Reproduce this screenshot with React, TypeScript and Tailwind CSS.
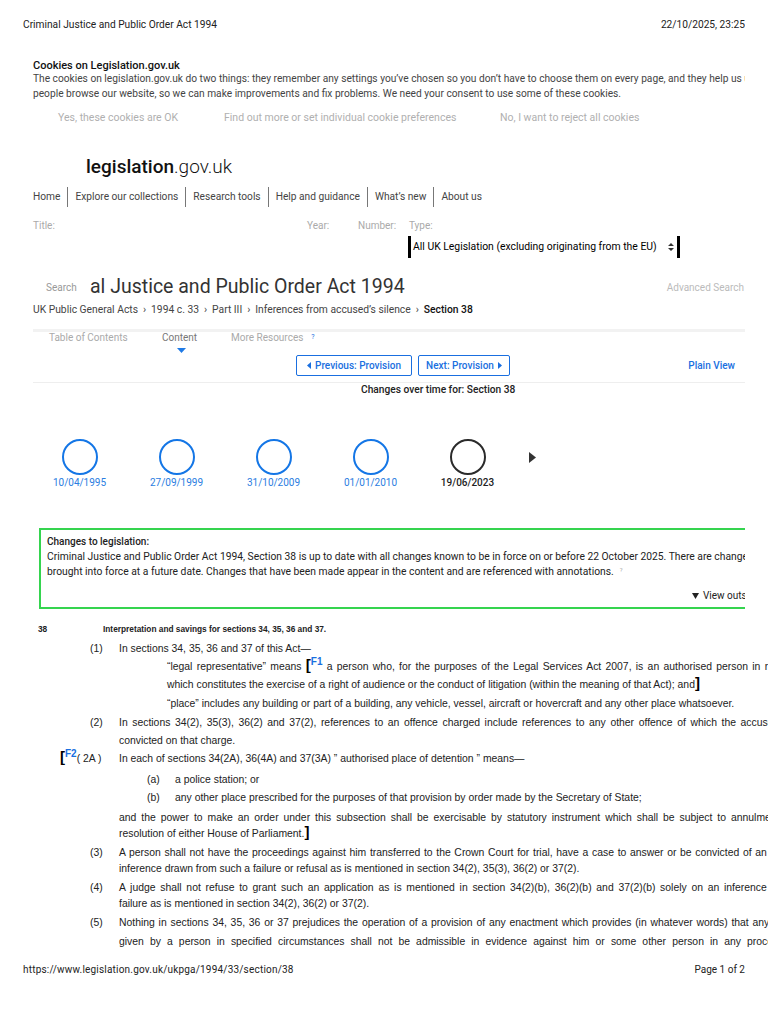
import type { ReactNode } from "react";

const dates = ["10/04/1995", "27/09/1999", "31/10/2009", "01/01/2010", "19/06/2023"];

const Sup = ({ children }: { children: ReactNode }) => (
  <span className="relative -top-[5px] text-[10px] font-bold text-[#1a6fe0] font-['Liberation_Sans',Arial,sans-serif]">
    {children}
  </span>
);

const Bracket = ({ children }: { children: ReactNode }) => (
  <span className="text-[15px] font-bold leading-[10px] text-black">{children}</span>
);

const App = () => {
  return (
    <div className="w-[768px] h-[1024px] overflow-hidden bg-white text-[#222] font-['Roboto',sans-serif]">
      {/* web part, clipped a bit before the page edge */}
      <div className="w-[745px] overflow-hidden">
        <div className="h-[50px] flex items-center justify-between pl-[23px] text-[10.2px] text-[#222]">
          <span>Criminal Justice and Public Order Act 1994</span>
          <span>22/10/2025, 23:25</span>
        </div>

        <div className="pl-[33px]">
          <div className="mt-[9px] h-[13px] leading-[13px] text-[11px] font-medium text-[#111]">
            Cookies on Legislation.gov.uk
          </div>
          <div className="text-[10.2px] leading-[14.5px] text-[#444] whitespace-nowrap">
            <div>
              The cookies on legislation.gov.uk do two things: they remember any settings you’ve chosen so you don’t have to choose them on every page, and they help us understand how
            </div>
            <div>
              people browse our website, so we can make improvements and fix problems. We need your consent to use some of these cookies.
            </div>
          </div>
          <div className="h-[34px] flex items-center pl-[25px] text-[10.5px] text-[#b0b0b0] whitespace-nowrap">
            <span className="w-[166px]">Yes, these cookies are OK</span>
            <span className="w-[276px]">Find out more or set individual cookie preferences</span>
            <span>No, I want to reject all cookies</span>
          </div>
        </div>

        <div className="mt-[19px] h-[26px] flex items-center pl-[86px] text-[19px] text-[#111]">
          <span className="font-medium">legislation</span>
          <span className="font-light">.gov.uk</span>
        </div>

        <nav className="h-[34px] flex items-center pl-[33px] text-[10.2px] text-[#444] whitespace-nowrap">
          <span className="h-[20px] flex items-center pr-[7px]">Home</span>
          <span className="h-[20px] flex items-center px-[7px] border-l border-[#777]">Explore our collections</span>
          <span className="h-[20px] flex items-center px-[7px] border-l border-[#777]">Research tools</span>
          <span className="h-[20px] flex items-center px-[7px] border-l border-[#777]">Help and guidance</span>
          <span className="h-[20px] flex items-center px-[7px] border-l border-[#777]">What’s new</span>
          <span className="h-[20px] flex items-center px-[7px] border-l border-[#777]">About us</span>
        </nav>

        <div className="h-[22px] flex items-center pl-[33px] text-[10px] text-[#aaa]">
          <span className="w-[274px]">Title:</span>
          <span className="w-[51px]">Year:</span>
          <span className="w-[51px]">Number:</span>
          <span>Type:</span>
        </div>
        <div className="ml-[408px] w-[272px] h-[22px] flex items-center justify-between border-x-[3px] border-black pl-[2px] pr-[3px] text-[10.4px] text-black whitespace-nowrap">
          <span>All UK Legislation (excluding originating from the EU)</span>
          <svg width="6" height="10" viewBox="0 0 6 10" className="shrink-0 text-[#333]">
            <path d="M0 4 L3 1 L6 4 Z M0 6 L3 9 L6 6 Z" fill="currentColor" />
          </svg>
        </div>

        <div className="mt-[13px] h-[32px] flex items-center pl-[46px] pr-[1px] whitespace-nowrap">
          <span className="w-[44px] text-[10px] text-[#999]">Search</span>
          <span className="flex-1 text-[19.5px] text-[#333]">al Justice and Public Order Act 1994</span>
          <span className="text-[10px] text-[#bbb]">Advanced Search</span>
        </div>
        <div className="h-[14px] flex items-center gap-[5px] pl-[33px] text-[10.3px] text-[#444] whitespace-nowrap">
          <span>UK Public General Acts</span>
          <span>›</span>
          <span>1994 c. 33</span>
          <span>›</span>
          <span>Part III</span>
          <span>›</span>
          <span>Inferences from accused’s silence</span>
          <span>›</span>
          <span className="text-[#111] font-medium">Section 38</span>
        </div>

        <div className="mt-[12px] ml-[33px] h-[3px] bg-[#f2f2f2]" />
        <div className="h-[10px] flex items-center pl-[49px] text-[10px] text-[#aaa] whitespace-nowrap">
          <span className="w-[113px]">Table of Contents</span>
          <span className="w-[69px] text-[#777]">Content</span>
          <span>More Resources</span>
          <span className="ml-[8px] text-[7px] text-[#1a6fe0]">?</span>
        </div>
        <div className="h-[13px] flex items-end pb-[2px] pl-[177px]">
          <svg width="9" height="5" viewBox="0 0 9 5">
            <path d="M0 0 H9 L4.5 5 Z" fill="#1f7ae6" />
          </svg>
        </div>
        <div className="h-[21px] flex items-center pl-[296px] pr-[10px] text-[10px] font-medium text-[#1a6fe0] whitespace-nowrap">
          <span className="w-[116px] h-[21px] flex items-center justify-center gap-[4px] border border-[#1a6fe0] rounded-[2px]">
            <svg width="4" height="7" viewBox="0 0 4 7">
              <path d="M4 0 V7 L0 3.5 Z" fill="currentColor" />
            </svg>
            Previous: Provision
          </span>
          <span className="ml-[6px] w-[92px] h-[21px] flex items-center justify-center gap-[4px] border border-[#1a6fe0] rounded-[2px]">
            Next: Provision
            <svg width="4" height="7" viewBox="0 0 4 7">
              <path d="M0 0 V7 L4 3.5 Z" fill="currentColor" />
            </svg>
          </span>
          <span className="ml-auto">Plain View</span>
        </div>
        <div className="mt-[6px] ml-[33px] border-t border-[#eee]" />
        <div className="h-[14px] flex items-center pl-[361px] text-[10.2px] font-medium text-[#222]">
          Changes over time for: Section 38
        </div>

        <div className="mt-[42px] flex pl-[31px]">
          {dates.map((d, i) => (
            <div key={d} className="w-[97px] flex flex-col items-center">
              <div
                className={
                  i === 4
                    ? "w-[36px] h-[36px] rounded-full border-[2.5px] border-[#2b2b2b]"
                    : "w-[36px] h-[36px] rounded-full border-[2.5px] border-[#1476e6]"
                }
              />
              <div
                className={
                  i === 4
                    ? "mt-[2px] h-[12px] leading-[12px] text-[10px] font-medium text-[#222]"
                    : "mt-[2px] h-[12px] leading-[12px] text-[10px] text-[#2a7de1]"
                }
              >
                {d}
              </div>
            </div>
          ))}
          <div className="h-[36px] flex items-center ml-[13px]">
            <svg width="7" height="11" viewBox="0 0 7 11">
              <path d="M0 0 L7 5.5 L0 11 Z" fill="#333" />
            </svg>
          </div>
        </div>

        <div className="mt-[39px] ml-[39px] w-[760px] h-[81px] border-2 border-[#35d44f] pl-[6px] text-[10.3px] text-[#222] whitespace-nowrap">
          <div className="mt-[5px] h-[14px] leading-[14px] text-[10px] font-medium">Changes to legislation:</div>
          <div className="leading-[15px]">
            Criminal Justice and Public Order Act 1994, Section 38 is up to date with all changes known to be in force on or before 22 October 2025. There are changes that may be
          </div>
          <div className="leading-[15px]">
            brought into force at a future date. Changes that have been made appear in the content and are referenced with annotations.
            <span className="ml-[6px] relative -top-[3px] text-[6px] text-[#aaa]">?</span>
          </div>
          <div className="mt-[10px] h-[12px] leading-[12px] pl-[645px] flex items-center gap-[4px] text-[10px]">
            <svg width="7" height="6" viewBox="0 0 7 6" className="shrink-0">
              <path d="M0 0 H7 L3.5 6 Z" fill="#222" />
            </svg>
            <span>View outstanding changes</span>
          </div>
        </div>
      </div>

      {/* provision text */}
      <div className="font-['Liberation_Sans',Arial,sans-serif] text-[10.4px] leading-[16px] text-[#222] whitespace-nowrap">
        <div className="mt-[12px] h-[16px] flex items-center font-bold text-[8.3px]">
          <span className="pl-[38px] w-[103px]">38</span>
          <span>Interpretation and savings for sections 34, 35, 36 and 37.</span>
        </div>

        <div className="mt-[4px] flex pl-[90px]">
          <span className="w-[29px]">(1)</span>
          <span>In sections 34, 35, 36 and 37 of this Act—</span>
        </div>
        <div className="mt-[2px] pl-[167px] [word-spacing:1.4px]">
          “legal representative” means <Bracket>[</Bracket><Sup>F1</Sup> a person who, for the purposes of the Legal Services Act 2007, is an authorised person in relation to an activity
        </div>
        <div className="mt-[2px] pl-[167px]">
          which constitutes the exercise of a right of audience or the conduct of litigation (within the meaning of that Act); and<Bracket>]</Bracket>
        </div>
        <div className="mt-[3px] pl-[167px]">
          “place” includes any building or part of a building, any vehicle, vessel, aircraft or hovercraft and any other place whatsoever.
        </div>

        <div className="mt-[3px] flex pl-[90px]">
          <span className="w-[29px] shrink-0">(2)</span>
          <div>
            <div className="[word-spacing:1.7px]">
              In sections 34(2), 35(3), 36(2) and 37(2), references to an offence charged include references to any other offence of which the accused could lawfully be
            </div>
            <div className="mt-[2px]">convicted on that charge.</div>
          </div>
        </div>

        <div className="mt-[2px] flex pl-[60px]">
          <span className="w-[59px] shrink-0">
            <Bracket>[</Bracket><Sup>F2</Sup>( 2A )
          </span>
          <span>In each of sections 34(2A), 36(4A) and 37(3A) ” authorised place of detention ” means—</span>
        </div>
        <div className="mt-[5px] flex pl-[147px]">
          <span className="w-[28px]">(a)</span>
          <span>a police station; or</span>
        </div>
        <div className="mt-[2px] flex pl-[147px]">
          <span className="w-[28px]">(b)</span>
          <span>any other place prescribed for the purposes of that provision by order made by the Secretary of State;</span>
        </div>
        <div className="mt-[4px] pl-[119px] [word-spacing:2.05px]">
          and the power to make an order under this subsection shall be exercisable by statutory instrument which shall be subject to annulment in pursuance of a
        </div>
        <div className="pl-[119px]">
          resolution of either House of Parliament.<Bracket>]</Bracket>
        </div>

        <div className="mt-[3px] flex pl-[90px]">
          <span className="w-[29px] shrink-0">(3)</span>
          <div>
            <div className="[word-spacing:0.8px]">
              A person shall not have the proceedings against him transferred to the Crown Court for trial, have a case to answer or be convicted of an offence solely on an
            </div>
            <div>inference drawn from such a failure or refusal as is mentioned in section 34(2), 35(3), 36(2) or 37(2).</div>
          </div>
        </div>

        <div className="mt-[3px] flex pl-[90px]">
          <span className="w-[29px] shrink-0">(4)</span>
          <div>
            <div className="[word-spacing:1.85px]">
              A judge shall not refuse to grant such an application as is mentioned in section 34(2)(b), 36(2)(b) and 37(2)(b) solely on an inference drawn from such a
            </div>
            <div>failure as is mentioned in section 34(2), 36(2) or 37(2).</div>
          </div>
        </div>

        <div className="mt-[3px] flex pl-[90px]">
          <span className="w-[29px] shrink-0">(5)</span>
          <div>
            <div className="[word-spacing:0.9px]">
              Nothing in sections 34, 35, 36 or 37 prejudices the operation of a provision of any enactment which provides (in whatever words) that any answer or evidence
            </div>
            <div className="mt-[3px] [word-spacing:3.2px]">
              given by a person in specified circumstances shall not be admissible in evidence against him or some other person in any proceedings or class of proceedings
            </div>
          </div>
        </div>
      </div>

      <div className="mt-[11px] w-[745px] h-[16px] flex items-center justify-between pl-[23px] text-[10px] text-[#222]">
        <span className="tracking-[0.2px]">https://www.legislation.gov.uk/ukpga/1994/33/section/38</span>
        <span>Page 1 of 2</span>
      </div>
    </div>
  );
};

export default App;
